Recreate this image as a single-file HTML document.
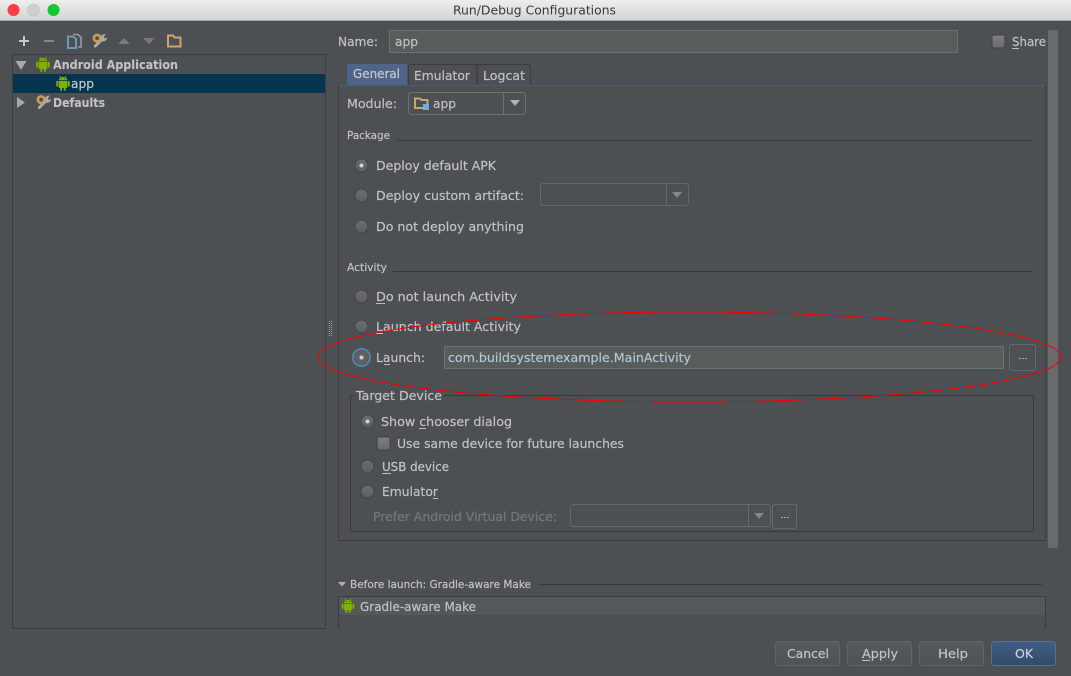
<!DOCTYPE html>
<html><head><meta charset="utf-8"><title>Run/Debug Configurations</title>
<style>
html,body{margin:0;padding:0;background:#4d5053;width:1071px;height:676px;overflow:hidden}
svg{display:block}
text{font-family:"DejaVu Sans","Liberation Sans",sans-serif;font-size:12.5px;fill:#c0c2c3;stroke:#c0c2c3;stroke-width:.2px}
.s{font-size:11px}
.b{font-weight:bold;stroke-width:.1px}
</style></head><body>
<svg width="1071" height="676" viewBox="0 0 1071 676" xmlns="http://www.w3.org/2000/svg">
<defs>
<linearGradient id="tb" x1="0" y1="0" x2="0" y2="1"><stop offset="0" stop-color="#eeeeee"/><stop offset="1" stop-color="#d4d4d4"/></linearGradient>
<linearGradient id="rd" x1="0" y1="0" x2="0" y2="1"><stop offset="0" stop-color="#6b6e71"/><stop offset="1" stop-color="#5c5f62"/></linearGradient>
<linearGradient id="ck" x1="0" y1="0" x2="0" y2="1"><stop offset="0" stop-color="#7c7e80"/><stop offset="1" stop-color="#6a6c6e"/></linearGradient>
<linearGradient id="ok" x1="0" y1="0" x2="0" y2="1"><stop offset="0" stop-color="#3f5f87"/><stop offset="1" stop-color="#344a68"/></linearGradient>
<linearGradient id="bt" x1="0" y1="0" x2="0" y2="1"><stop offset="0" stop-color="#565a5d"/><stop offset="1" stop-color="#4f5356"/></linearGradient>
<symbol id="droid" viewBox="0 0 14 16" overflow="visible">
<path fill="#80b000" d="M2.800 6h8.400v7h-1.500v2.700H7.900V13H6.100v2.700H4.300V13H2.800zM.3 6h2v5.500h-2zM11.700 6h2v5.500h-2zM2.800 5.300C2.800 3.200 5 2 7 2s4.200 1.200 4.200 3.300z"/>
<path stroke="#80b000" stroke-width=".9" d="M4.800 2.900 4 .9M9.200 2.900 10 .9"/>
<rect x="5" y="3.400" width="1" height="1" fill="#4d5053"/><rect x="8" y="3.400" width="1" height="1" fill="#4d5053"/>
</symbol>
<symbol id="wrench" viewBox="0 0 16 16" overflow="visible">
<path d="M3.500 14 11 6.500" stroke="#a9abad" stroke-width="3" stroke-linecap="round"/>
<path d="M9.500 5C9.800 2 12.500.5 15 1.500L12.700 3.700l.6 1.700 1.700.4L16 4c.6 3-2 5.500-5 4.800z" fill="#a9abad"/>
<circle cx="5.500" cy="5.500" r="3.500" fill="none" stroke="#cf9c58" stroke-width="2.800"/>
</symbol>
</defs>

<!-- background and title bar -->
<rect width="1071" height="676" fill="#4d5053"/>
<rect width="1071" height="20" fill="url(#tb)"/>
<rect y="20" width="1071" height="1" fill="#a8a8a8"/>
<circle cx="13.500" cy="10" r="6" fill="#fc3d46"/>
<circle cx="33.500" cy="10" r="6" fill="#cfcfcf" stroke="#bdbdbd" stroke-width=".6"/>
<circle cx="53.500" cy="10" r="6" fill="#12c92f"/>
<text x="453" y="14.500" textLength="163" lengthAdjust="spacingAndGlyphs" style="fill:#3a3a3a;stroke:none">Run/Debug Configurations</text>

<!-- toolbar -->
<path d="M19 41h10M24 36v10" stroke="#c5c7c8" stroke-width="2"/>
<path d="M44 41h10" stroke="#85888a" stroke-width="2"/>
<path d="M73 34.500h5l3 3v9.500h-3" fill="none" stroke="#9a9c9e" stroke-width="1.600"/>
<path d="M68 36.500h5l3 2.500v9h-8z" fill="#4d5053" stroke="#6ca0c4" stroke-width="1.800"/>
<use href="#wrench" x="92" y="33" width="15" height="15"/>
<path d="M118 44l6-6 6 6z" fill="#77797b"/>
<path d="M143 38h12l-6 6z" fill="#77797b"/>
<path d="M168 35.500h5l1.500 2h6v9h-12.500z" fill="none" stroke="#cfa36a" stroke-width="2"/>

<!-- left tree -->
<rect x="12.500" y="54.500" width="313" height="574" fill="#4d5053" stroke="#3a3c3e"/>
<rect x="13" y="74" width="312" height="19" fill="#05344f"/>
<path d="M15.500 61h11l-5.500 9z" fill="#a5a7a9"/>
<use href="#droid" x="36" y="56" width="14" height="16"/>
<text class="b" x="53" y="69" textLength="125" lengthAdjust="spacingAndGlyphs">Android Application</text>
<use href="#droid" x="56" y="75" width="14" height="16"/>
<text x="71" y="88" textLength="23" lengthAdjust="spacingAndGlyphs" style="fill:#c5cdd2">app</text>
<path d="M17 97v11l8-5.500z" fill="#a5a7a9"/>
<use href="#wrench" x="36" y="94" width="15" height="16"/>
<text class="b" x="53" y="107" textLength="52" lengthAdjust="spacingAndGlyphs">Defaults</text>

<!-- splitter -->
<path d="M329.500 321v15M331.500 321v15" stroke="#a0a2a4" stroke-dasharray="1 1"/>

<!-- name row -->
<text x="338" y="46" textLength="40" lengthAdjust="spacingAndGlyphs">Name:</text>
<rect x="389.500" y="30.500" width="568" height="22" fill="#585d5c" stroke="#6d7171"/>
<text x="395" y="46" textLength="23" lengthAdjust="spacingAndGlyphs">app</text>
<rect x="992" y="35" width="13" height="13" rx="2" fill="url(#ck)" stroke="#3f4143"/>
<text x="1012" y="46" textLength="34" lengthAdjust="spacingAndGlyphs">Share</text>
<path d="M1012 48.500h7" stroke="#bdbfc0"/>
<rect x="1048" y="30" width="10" height="518" rx="2" fill="#696a6b"/>

<!-- tab panel -->
<rect x="338.500" y="85.500" width="707" height="455" fill="none" stroke="#3a3c3e"/>
<path d="M339 85.500h706" stroke="#4a5d78"/>
<path d="M408.500 85V66.500q0-2 2-2h64.500q2 0 2 2V85" fill="#4d5053" stroke="#3a3c3e"/>
<path d="M477.500 85V66.500q0-2 2-2h49q2 0 2 2V85" fill="#4d5053" stroke="#3a3c3e"/>
<path d="M347 85V66q0-2 2-2h56q2 0 2 2v19z" fill="#4e6589"/>
<text x="353" y="78" textLength="47" lengthAdjust="spacingAndGlyphs" style="fill:#c4c9d0;stroke:#c4c9d0">General</text>
<text x="414" y="80" textLength="56" lengthAdjust="spacingAndGlyphs">Emulator</text>
<text x="483" y="80" textLength="42" lengthAdjust="spacingAndGlyphs">Logcat</text>

<!-- module -->
<text x="347" y="108" textLength="50" lengthAdjust="spacingAndGlyphs">Module:</text>
<rect x="408.500" y="92.500" width="117" height="22" rx="3" fill="none" stroke="#6d7072"/>
<path d="M503.500 93v21" stroke="#6d7072"/>
<path d="M510 100h10l-5 6z" fill="#b0b2b4"/>
<path d="M415 98.500h5l1.500 1.500h6v8h-12.500z" fill="none" stroke="#cfa36a" stroke-width="2"/>
<rect x="423" y="104" width="6" height="6" fill="#6cb3d9"/>
<text x="433" y="108" textLength="23" lengthAdjust="spacingAndGlyphs">app</text>

<!-- package -->
<text class="s" x="347" y="139" textLength="43" lengthAdjust="spacingAndGlyphs">Package</text>
<path d="M397 140.500h636" stroke="#37393b"/>
<circle cx="361.500" cy="165.500" r="6.500" fill="url(#rd)" stroke="#424447"/>
<circle cx="361.500" cy="165.500" r="2" fill="#d0d2d4"/>
<text x="376" y="170" textLength="120" lengthAdjust="spacingAndGlyphs">Deploy default APK</text>
<circle cx="361.500" cy="195.500" r="6.500" fill="url(#rd)" stroke="#424447"/>
<text x="376" y="200" textLength="148" lengthAdjust="spacingAndGlyphs">Deploy custom artifact:</text>
<rect x="540.500" y="183.500" width="148" height="22" rx="3" fill="none" stroke="#65686a"/>
<path d="M666.500 184v21" stroke="#65686a"/>
<path d="M672 192h10l-5 6z" fill="#85888a"/>
<circle cx="361.500" cy="226.500" r="6.500" fill="url(#rd)" stroke="#424447"/>
<text x="376" y="231" textLength="148" lengthAdjust="spacingAndGlyphs">Do not deploy anything</text>

<!-- activity -->
<text class="s" x="347" y="271" textLength="40" lengthAdjust="spacingAndGlyphs">Activity</text>
<path d="M393 271.500h640" stroke="#37393b"/>
<circle cx="361.500" cy="296.500" r="6.500" fill="url(#rd)" stroke="#424447"/>
<text x="376" y="301" textLength="141" lengthAdjust="spacingAndGlyphs">Do not launch Activity</text>
<path d="M376 303.500h9" stroke="#bdbfc0"/>
<circle cx="361.500" cy="326.500" r="6.500" fill="url(#rd)" stroke="#424447"/>
<text x="376" y="331" textLength="145" lengthAdjust="spacingAndGlyphs">Launch default Activity</text>
<path d="M376 333.500h7" stroke="#bdbfc0"/>
<circle cx="361.500" cy="357.500" r="8.500" fill="none" stroke="#5b84a8" stroke-width="2.400" stroke-opacity=".85"/>
<circle cx="361.500" cy="357.500" r="6.500" fill="#606366"/>
<circle cx="361.500" cy="357.500" r="2" fill="#d0d2d4"/>
<text x="376" y="362" textLength="49" lengthAdjust="spacingAndGlyphs">Launch:</text>
<path d="M384 364.500h6" stroke="#bdbfc0"/>
<rect x="444.500" y="346.500" width="559" height="22" fill="#585d5c" stroke="#6d7171"/>
<text x="448" y="362" textLength="243" lengthAdjust="spacingAndGlyphs" style="fill:#b3c5d3;stroke:#b3c5d3">com.buildsystemexample.MainActivity</text>
<rect x="1009.500" y="344.500" width="26" height="26" rx="2" fill="none" stroke="#65686a"/>
<path d="M1019 358.500h8" stroke="#a0a2a4" stroke-dasharray="2 1"/>

<!-- target device -->
<rect x="350.500" y="395.500" width="683" height="136" fill="none" stroke="#37393b"/>
<rect x="355" y="390" width="88" height="10" fill="#4d5053"/>
<text x="356" y="400" textLength="86" lengthAdjust="spacingAndGlyphs">Target Device</text>
<circle cx="367.500" cy="421.500" r="6.500" fill="url(#rd)" stroke="#424447"/>
<circle cx="367.500" cy="421.500" r="2" fill="#d0d2d4"/>
<text x="381" y="426" textLength="131" lengthAdjust="spacingAndGlyphs">Show chooser dialog</text>
<path d="M419 428.500h7" stroke="#bdbfc0"/>
<rect x="377" y="437" width="13" height="13" rx="2" fill="url(#ck)" stroke="#3f4143"/>
<text x="397" y="448" textLength="227" lengthAdjust="spacingAndGlyphs">Use same device for future launches</text>
<circle cx="367.500" cy="466.500" r="6.500" fill="url(#rd)" stroke="#424447"/>
<text x="382" y="471" textLength="67" lengthAdjust="spacingAndGlyphs">USB device</text>
<path d="M382 473.500h9" stroke="#bdbfc0"/>
<circle cx="367.500" cy="491.500" r="6.500" fill="url(#rd)" stroke="#424447"/>
<text x="382" y="496" textLength="56" lengthAdjust="spacingAndGlyphs">Emulator</text>
<path d="M433 498.500h5" stroke="#bdbfc0"/>
<text x="373" y="521" textLength="184" lengthAdjust="spacingAndGlyphs" style="fill:#75787b;stroke:#75787b">Prefer Android Virtual Device:</text>
<rect x="570.500" y="504.500" width="200" height="22" rx="3" fill="none" stroke="#65686a"/>
<path d="M748.500 505v21" stroke="#65686a"/>
<path d="M754 513h10l-5 6z" fill="#85888a"/>
<rect x="772.500" y="504.500" width="24" height="24" rx="2" fill="none" stroke="#65686a"/>
<path d="M781 517.500h8" stroke="#a0a2a4" stroke-dasharray="2 1"/>

<!-- before launch -->
<path d="M338 582h8l-4 4.500z" fill="#b0b2b4"/>
<text class="s" x="350" y="588" textLength="181" lengthAdjust="spacingAndGlyphs">Before launch: Gradle-aware Make</text>
<path d="M538 584.500h504" stroke="#37393b"/>
<rect x="339" y="597" width="706" height="18" fill="#54585a"/>
<path d="M338.500 629V596.500h707V629" fill="none" stroke="#3a3c3e"/>
<use href="#droid" x="341" y="598" width="14" height="15"/>
<text x="360" y="611" textLength="116" lengthAdjust="spacingAndGlyphs">Gradle-aware Make</text>

<!-- buttons -->
<rect x="775.500" y="641.500" width="64" height="24" rx="3" fill="url(#bt)" stroke="#626568"/>
<text x="787" y="658" textLength="42" lengthAdjust="spacingAndGlyphs">Cancel</text>
<rect x="847.500" y="641.500" width="64" height="24" rx="3" fill="url(#bt)" stroke="#626568"/>
<text x="862" y="658" textLength="36" lengthAdjust="spacingAndGlyphs">Apply</text>
<path d="M862 660.500h8" stroke="#bdbfc0"/>
<rect x="919.500" y="641.500" width="64" height="24" rx="3" fill="url(#bt)" stroke="#626568"/>
<text x="938" y="658" textLength="30" lengthAdjust="spacingAndGlyphs">Help</text>
<rect x="991.500" y="641.500" width="64" height="24" rx="3" fill="url(#ok)" stroke="#56708f"/>
<text x="1015" y="658" textLength="18" lengthAdjust="spacingAndGlyphs" style="fill:#ccd3dc;stroke:#ccd3dc">OK</text>

<!-- red annotation -->
<ellipse cx="689.500" cy="357" rx="371.500" ry="45" fill="none" stroke="#f40000" stroke-width="1" shape-rendering="crispEdges"/>
</svg>
</body></html>
